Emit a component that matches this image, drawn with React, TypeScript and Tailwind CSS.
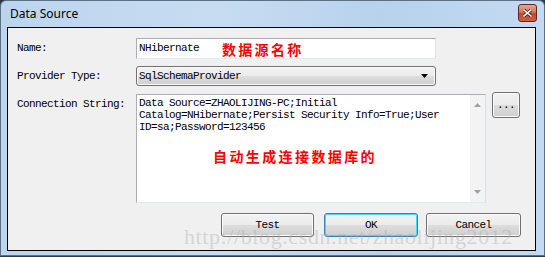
import React from "react";

const mono = { fontFamily: '"Liberation Mono", "DejaVu Sans Mono", monospace' };
const cjk = { fontFamily: '"Noto Sans CJK SC", "Noto Sans", sans-serif' };

function Btn({ label, w, isDefault }: { label: string; w: string; isDefault?: boolean }) {
  return (
    <div
      className={`${w} h-[24px] rounded-[3px] border ${
        isDefault ? "border-[#3c7fb1] shadow-[inset_0_0_0_1px_#48d8fb]" : "border-[#707070] shadow-[inset_0_0_0_1px_#fcfcfc]"
      } bg-[linear-gradient(#f2f2f2_0%,#ebebeb_50%,#dddddd_50%,#cfcfcf_100%)] flex items-center justify-center text-[11px] tracking-[-0.6px] text-black`}
      style={mono}
    >
      {label}
    </div>
  );
}

export default function App() {
  return (
    <div className="w-[545px] h-[257px] bg-[#2b3a4a]">
      <div className="relative w-[545px] h-[256px] border border-[#5d6f82] rounded-t-[6px] bg-[linear-gradient(90deg,#bcd5ee_0%,#c7dcf1_40%,#b8d2ec_70%,#c3daf1_100%)] flex flex-col pl-[6px] pr-[8px] pb-[4px]">
        {/* title bar */}
        <div className="h-[26px] flex items-center justify-between">
          <span className="pl-[3px] text-[12px] text-black" style={{ fontFamily: '"Noto Sans", "Open Sans", sans-serif' }}>
            Data Source
          </span>
          <div className="w-[19px] h-[18px] mt-[-2px] mr-[-1px] rounded-[3px] border border-[#5a2a1e] bg-[linear-gradient(#e8a58e_0%,#d8735a_45%,#c5432a_55%,#d2603e_100%)] flex items-center justify-center">
            <svg width="9" height="8" viewBox="0 0 9 8">
              <path d="M1 1 L8 7 M8 1 L1 7" stroke="#3a1a10" strokeWidth="3" strokeLinecap="square" />
              <path d="M1 1 L8 7 M8 1 L1 7" stroke="#ffffff" strokeWidth="1.6" strokeLinecap="square" />
            </svg>
          </div>
        </div>
        {/* client area */}
        <div className="flex-1 border border-black bg-[#f0f0f0] flex flex-col pt-[10px] text-[11px] tracking-[-0.6px] text-black" style={mono}>
          {/* Name */}
          <div className="flex items-center">
            <div className="w-[128px] pl-[9px]">Name:</div>
            <div className="w-[300px] h-[21px] border border-[#abadb3] border-b-[#e3e9ef] border-r-[#dbdfe6] bg-white flex items-center pl-[2px]">
              <span>NHibernate</span>
              <span className="ml-[23px] text-[14px] font-bold text-[#ff0000] tracking-[2.3px] leading-none" style={cjk}>
                数据源名称
              </span>
            </div>
          </div>
          {/* Provider */}
          <div className="flex items-center mt-[7px]">
            <div className="w-[128px] pl-[9px]">Provider Type:</div>
            <div className="w-[300px] h-[20px] rounded-[3px] border border-[#707070] bg-[linear-gradient(#f2f2f2_0%,#ebebeb_50%,#dddddd_50%,#cfcfcf_100%)] shadow-[inset_0_0_0_1px_#fbfbfb] flex items-center justify-between pl-[2px] pr-[7px]">
              <span>SqlSchemaProvider</span>
              <svg width="7" height="4" viewBox="0 0 7 4">
                <path d="M0 0 L7 0 L3.5 4 Z" fill="#000" />
              </svg>
            </div>
          </div>
          {/* Connection string */}
          <div className="flex items-start mt-[8px]">
            <div className="w-[128px] pl-[9px] pt-[2px]">Connection String:</div>
            <div className="w-[350px] h-[109px] border border-[#abadb3] border-b-[#e3e9ef] border-r-[#dbdfe6] bg-white flex">
              <div className="flex-1 flex flex-col pl-[2px] pt-[2px] leading-[12px]">
                <span>Data Source=ZHAOLIJING-PC;Initial</span>
                <span>Catalog=NHibernate;Persist Security Info=True;User</span>
                <span>ID=sa;Password=123456</span>
                <span className="mt-[16px] pl-[74px] text-[14px] font-bold text-[#ff0000] tracking-[2.4px] leading-none" style={cjk}>
                  自动生成连接数据库的
                </span>
              </div>
              <div className="w-[15px] bg-[#f3f3f3] flex flex-col items-center justify-between py-[8px]">
                <svg width="7" height="4" viewBox="0 0 7 4">
                  <path d="M0 4 L7 4 L3.5 0 Z" fill="#a0a0a0" />
                </svg>
                <svg width="7" height="4" viewBox="0 0 7 4">
                  <path d="M0 0 L7 0 L3.5 4 Z" fill="#a0a0a0" />
                </svg>
              </div>
            </div>
            <div className="ml-[6px] mt-[-2px] w-[28px] h-[26px] rounded-[3px] border border-[#707070] bg-[linear-gradient(#f2f2f2_0%,#ebebeb_50%,#dddddd_50%,#cfcfcf_100%)] shadow-[inset_0_0_0_1px_#fcfcfc] flex items-center justify-center">
              ...
            </div>
          </div>
          {/* buttons */}
          <div className="flex justify-end mt-[10px] pr-[14px]">
            <Btn label="Test" w="w-[93px]" />
            <div className="ml-[10px]">
              <Btn label="OK" w="w-[94px]" isDefault />
            </div>
            <div className="ml-[8px]">
              <Btn label="Cancel" w="w-[95px]" />
            </div>
          </div>
        </div>
        {/* watermark */}
        <div
          className="absolute left-[183px] top-[219px] text-[22px] tracking-[0.6px] text-[#a8a8a8]/40 pointer-events-none whitespace-nowrap"
          style={{ fontFamily: '"Liberation Serif", "DejaVu Serif", serif' }}
        >
          http://blog.csdn.net/zhaolijing2012
        </div>
      </div>
    </div>
  );
}
